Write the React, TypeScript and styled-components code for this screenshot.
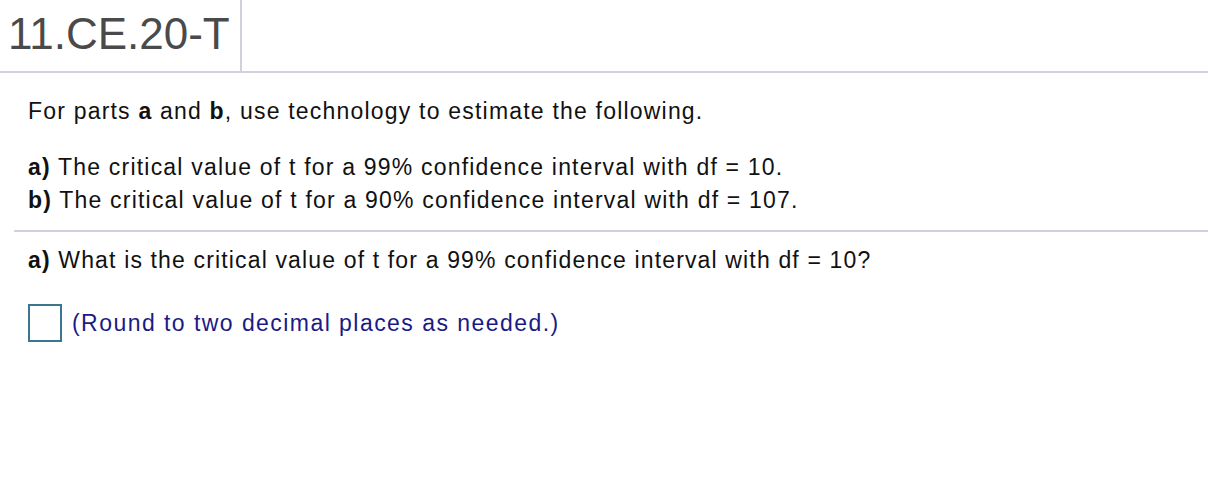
import styled, { createGlobalStyle } from 'styled-components';

const GlobalStyle = createGlobalStyle`
    html, body {
        margin: 0;
        padding: 0;
        background: #ffffff;
    }
    body {
        font-family: 'Liberation Sans', Arial, sans-serif;
    }
`;

const Page = styled.div`
    width: 1208px;
    height: 480px;
    background: #ffffff;
    overflow: hidden;
`;

const Header = styled.div`
    display: flex;
    height: 71px;
    border-bottom: 2px solid #d0d1dd;
`;

const TitleCell = styled.div`
    width: 242px;
    border-right: 2px solid #d0d1dd;
    box-sizing: border-box;
    padding: 9px 0 0 8px;
`;

const Title = styled.h1`
    margin: 0;
    font-size: 44px;
    line-height: 50px;
    font-weight: normal;
    color: #4a4a4a;
`;

const Body = styled.div`
    padding: 0 0 0 14px;
`;

const Section = styled.div`
    padding: 22px 0 13px 14px;
    font-size: 23px;
    line-height: 33px;
    letter-spacing: 1.2px;
    color: #111111;
`;

const Paragraph = styled.p<{ $gap?: number }>`
    margin: 0 0 ${({ $gap }) => $gap ?? 0}px 0;
`;

const Divider = styled.hr`
    margin: 0;
    border: 0;
    border-top: 2px solid #d0d1dd;
`;

const Question = styled.div`
    padding: 12px 0 0 14px;
    font-size: 23px;
    line-height: 33px;
    letter-spacing: 1.15px;
    color: #111111;
`;

const AnswerRow = styled.div`
    display: flex;
    align-items: center;
    gap: 10px;
    margin-top: 27px;
`;

const AnswerBox = styled.div`
    width: 34px;
    height: 38px;
    box-sizing: border-box;
    border: 2px solid #3a7690;
    background: #ffffff;
`;

const Hint = styled.span`
    color: #1a1a86;
    letter-spacing: 1.45px;
`;

const App = () => (
    <Page>
        <GlobalStyle />
        <Header>
            <TitleCell>
                <Title>11.CE.20-T</Title>
            </TitleCell>
        </Header>
        <Body>
            <Section>
                <Paragraph $gap={23}>
                    For parts <b>a</b> and <b>b</b>, use technology to estimate the following.
                </Paragraph>
                <Paragraph>
                    <b>a)</b> The critical value of t for a 99% confidence interval with df = 10.
                </Paragraph>
                <Paragraph>
                    <b>b)</b> The critical value of t for a 90% confidence interval with df = 107.
                </Paragraph>
            </Section>
            <Divider />
            <Question>
                <Paragraph>
                    <b>a)</b> What is the critical value of t for a 99% confidence interval with df = 10?
                </Paragraph>
                <AnswerRow>
                    <AnswerBox />
                    <Hint>(Round to two decimal places as needed.)</Hint>
                </AnswerRow>
            </Question>
        </Body>
    </Page>
);

export default App;
